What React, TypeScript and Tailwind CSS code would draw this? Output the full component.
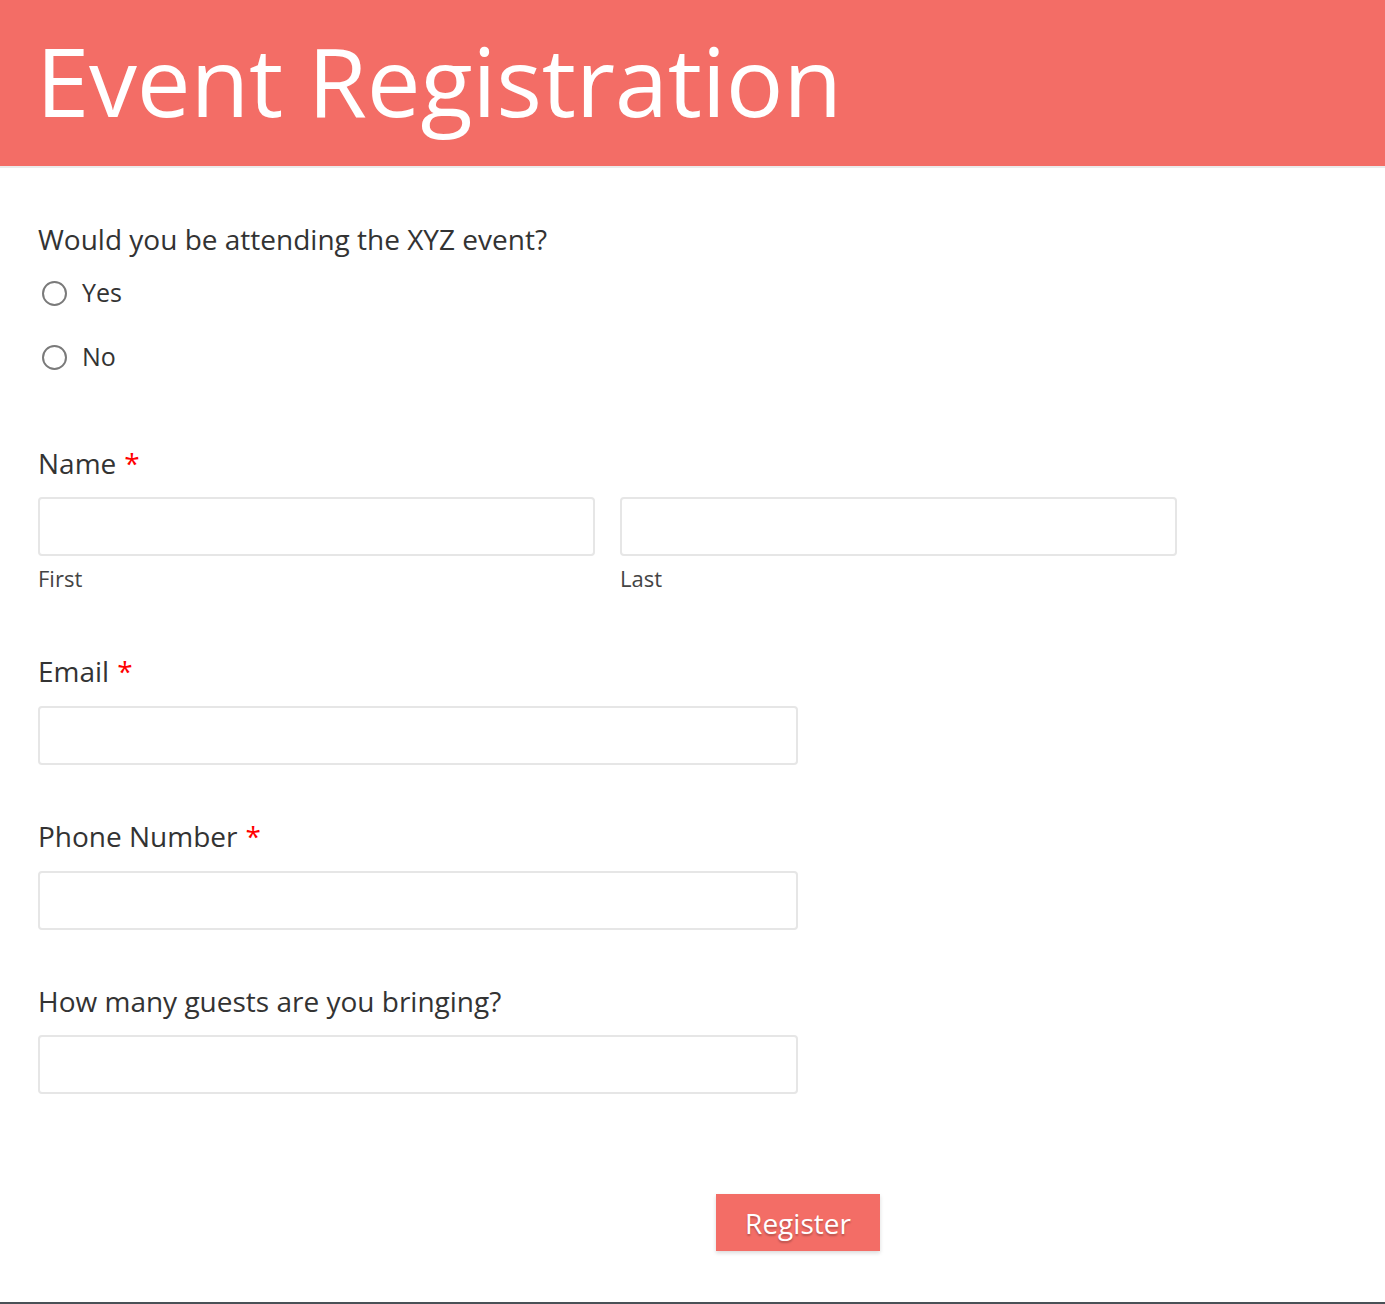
import React from "react";

function Req() {
  return <span className="text-[#ff0000] ml-[8px]">*</span>;
}

function Field({ className = "" }: { className?: string }) {
  return (
    <div
      className={`h-[59px] border-2 border-[#e6e6e6] rounded-[4px] bg-white ${className}`}
    />
  );
}

function Radio({ label }: { label: string }) {
  return (
    <label className="flex items-center h-[32px]">
      <span className="ml-[4px] w-[25px] h-[25px] rounded-full border-2 border-[#7a7a7a] bg-white" />
      <span className="ml-[15px] text-[25px] text-[#333]">{label}</span>
    </label>
  );
}

export default function App() {
  return (
    <div
      className="w-[1385px] min-h-[1304px] bg-white flex flex-col"
      style={{ fontFamily: '"Open Sans", sans-serif' }}
    >
      <header className="h-[168px] bg-[#f36d66] border-b-2 border-[#ebebeb] flex items-center pl-[36px]">
        <h1 className="text-[96px] leading-none text-white -mt-[6px] tracking-[-0.25px]">
          Event Registration
        </h1>
      </header>

      <main className="flex-1 px-[38px] pt-[52px] text-[#333]">
        <div className="text-[28px] leading-[38px]">
          Would you be attending the XYZ event?
        </div>
        <div className="mt-[19px] flex flex-col gap-[32px]">
          <Radio label="Yes" />
          <Radio label="No" />
        </div>

        <div className="mt-[71px] text-[28px] leading-[38px]">
          Name
          <Req />
        </div>
        <div className="mt-[15px] flex gap-[25px] w-[1139px]">
          <div className="flex-1">
            <Field />
            <div className="mt-[8px] text-[22px] leading-[28px] text-[#444]">First</div>
          </div>
          <div className="flex-1">
            <Field />
            <div className="mt-[8px] text-[22px] leading-[28px] text-[#444]">Last</div>
          </div>
        </div>

        <div className="mt-[60px] text-[28px] leading-[38px]">
          Email
          <Req />
        </div>
        <Field className="mt-[16px] w-[760px]" />

        <div className="mt-[52px] text-[28px] leading-[38px]">
          Phone Number
          <Req />
        </div>
        <Field className="mt-[16px] w-[760px]" />

        <div className="mt-[52px] text-[28px] leading-[38px]">
          How many guests are you bringing?
        </div>
        <Field className="mt-[15px] w-[760px]" />

        <div className="mt-[100px] flex">
          <button className="ml-[678px] w-[164px] h-[57px] bg-[#f36d66] text-white text-[28px] shadow-[0_2px_4px_rgba(0,0,0,0.15)] [text-shadow:0_2px_2px_rgba(0,0,0,0.25)]">
            Register
          </button>
        </div>
      </main>
      <div className="h-[2px] bg-[#4a5156]" />
    </div>
  );
}
